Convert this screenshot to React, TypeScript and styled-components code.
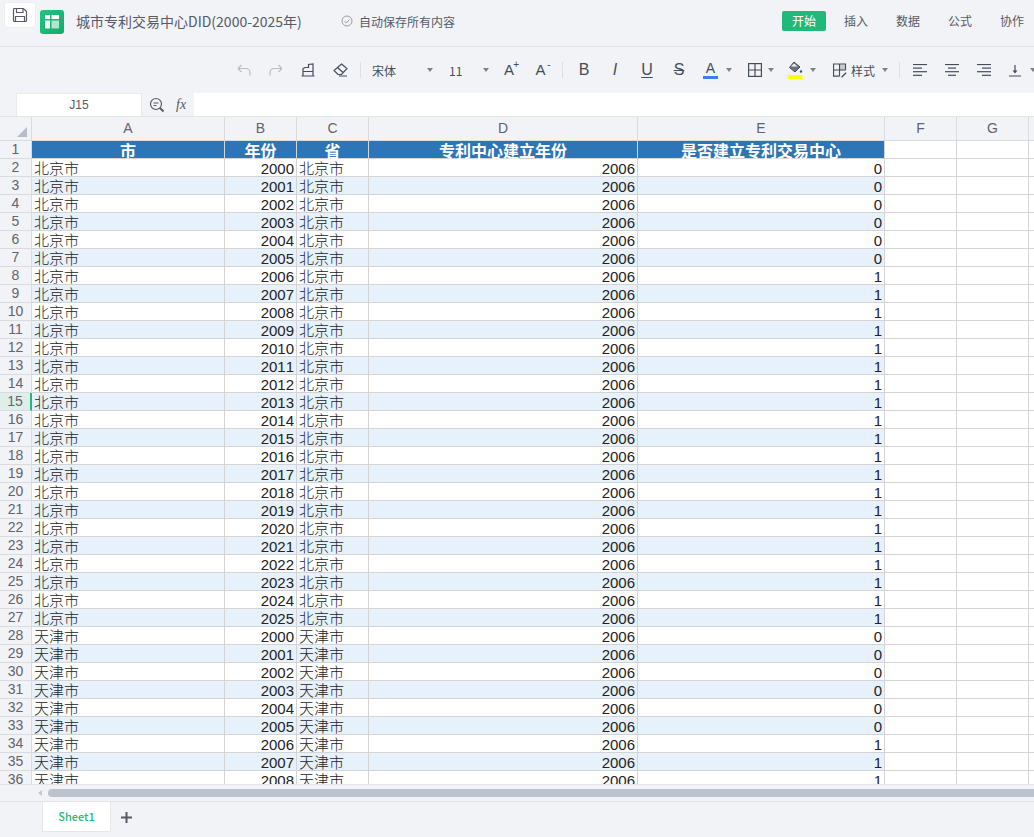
import React from 'react';
import styled, { createGlobalStyle } from 'styled-components';

const GlobalStyle = createGlobalStyle`
  html, body {
    margin: 0;
    padding: 0;
    height: 100%;
    overflow: hidden;
    background: #f2f3f7;
    font-family: "Noto Sans CJK SC", "Liberation Sans", sans-serif;
  }
`;

const Page = styled.div`
  display: flex;
  flex-direction: column;
  height: 837px;
  overflow: hidden;
`;

const TopBar = styled.div`
  display: flex;
  align-items: center;
  flex: none;
  height: 42px;
  border-bottom: 1px solid #e2e4e9;
  padding: 0 0 4px 4px;
`;

const SaveButton = styled.div`
  display: flex;
  align-items: center;
  justify-content: center;
  width: 32px;
  height: 26px;
  margin: -12px 4px 0 0;
  background: #fff;
  border: 1px solid #eceef2;
  border-radius: 3px;
  box-sizing: border-box;
`;

const Logo = styled.div`
  display: flex;
  align-items: center;
  justify-content: center;
  width: 24px;
  height: 24px;
  margin-top: 2px;
  background: linear-gradient(135deg, #22c47f, #14ab6c);
  border-radius: 3px;
`;

const DocTitle = styled.div`
  margin-left: 12px;
  font-size: 14px;
  line-height: 20px;
  color: #555a64;
  width: 265px;
  white-space: nowrap;
`;

const SaveState = styled.div`
  display: flex;
  align-items: center;
  gap: 6px;
  font-size: 12px;
  color: #555a64;
`;

const TabList = styled.div`
  display: flex;
  align-items: center;
  gap: 8px;
  margin-left: auto;
`;

const Tab = styled.div<{ $active?: boolean }>`
  width: 44px;
  height: 20px;
  line-height: 20px;
  text-align: center;
  font-size: 12px;
  border-radius: 2px;
  color: ${(p) => (p.$active ? '#fff' : '#555a64')};
  background: ${(p) => (p.$active ? '#1fb97a' : 'transparent')};
`;

const Toolbar = styled.div`
  display: flex;
  align-items: center;
  height: 46px;
  flex: none;
  padding-left: 228px;
  color: #454d5c;
  white-space: nowrap;
`;

const Tool = styled.div<{ $w?: number; $inset?: number; $muted?: boolean }>`
  display: flex;
  flex: none;
  align-items: center;
  justify-content: center;
  box-sizing: border-box;
  width: ${(p) => p.$w ?? 32}px;
  padding-left: ${(p) => p.$inset ?? 0}px;
  height: 24px;
  color: ${(p) => (p.$muted ? '#b9bdc5' : '#454d5c')};
`;

const Separator = styled.div<{ $ml?: number; $mr?: number }>`
  flex: none;
  width: 1px;
  height: 16px;
  margin: 0 ${(p) => p.$mr ?? 6}px 0 ${(p) => p.$ml ?? 4}px;
  background: #dcdfe4;
`;

const Caret = styled.div`
  flex: none;
  width: 0;
  height: 0;
  border-left: 3.5px solid transparent;
  border-right: 3.5px solid transparent;
  border-top: 4px solid #7d828c;
`;

const FontField = styled.div<{ $w: number; $left: number; $right: number }>`
  display: flex;
  flex: none;
  align-items: center;
  justify-content: space-between;
  width: ${(p) => p.$w}px;
  padding: 0 ${(p) => p.$right}px 0 ${(p) => p.$left}px;
  box-sizing: border-box;
  font-size: 12px;
  color: #454d5c;
`;

const LetterIcon = styled.span<{ $italic?: boolean; $line?: 'under' | 'through' }>`
  font-family: "Liberation Sans", sans-serif;
  font-size: 16px;
  line-height: 18px;
  font-style: ${(p) => (p.$italic ? 'italic' : 'normal')};
  text-decoration: ${(p) => (p.$line === 'under' ? 'underline' : p.$line === 'through' ? 'line-through' : 'none')};
  text-decoration-thickness: 1px;
  text-underline-offset: 2px;
`;

const SizeLetter = styled.span`
  position: relative;
  font-family: "Liberation Sans", sans-serif;
  font-size: 15px;
  line-height: 18px;
  padding-right: 4px;
  & > sup {
    position: absolute;
    top: -2px;
    right: -1px;
    font-size: 10px;
    line-height: 12px;
  }
`;

const ColorLetter = styled.span<{ $color: string }>`
  font-family: "Liberation Sans", sans-serif;
  font-size: 14px;
  line-height: 15px;
  width: 15px;
  text-align: center;
  border-bottom: 3px solid ${(p) => p.$color};
`;

const StyleLabel = styled.span`
  margin: 0 7px 0 4px;
  font-size: 12px;
`;

const FormulaBar = styled.div`
  display: flex;
  align-items: stretch;
  flex: none;
  height: 23px;
  padding-left: 16px;
  border-bottom: 1px solid #e2e4e9;
`;

const NameBox = styled.div`
  width: 126px;
  flex: none;
  background: #fff;
  border: 1px solid #e8eaee;
  border-bottom: none;
  box-sizing: border-box;
  text-align: center;
  font-family: "Liberation Sans", sans-serif;
  font-size: 12px;
  line-height: 22px;
  color: #555a64;
`;

const FormulaIcons = styled.div`
  display: flex;
  align-items: center;
  width: 52px;
  flex: none;
  padding-left: 7px;
  gap: 11px;
  box-sizing: border-box;
  color: #555a64;
`;

const Fx = styled.span`
  font-family: "Liberation Serif", serif;
  font-style: italic;
  font-size: 14px;
`;

const FormulaInput = styled.div`
  flex: 1;
  background: #fff;
`;

const Sheet = styled.div`
  flex: none;
  height: 667px;
  overflow: hidden;
  display: grid;
  grid-template-columns: 32px 193px 72px 72px 269px 247px 72px 72px 72px;
  grid-template-rows: 24px;
  grid-auto-rows: 18px;
  background: #fff;
  border-bottom: 1px solid #e2e4e9;
`;

const Corner = styled.div`
  position: relative;
  background: #f2f3f7;
  border-bottom: 1px solid #d8dbe0;
  border-right: 1px solid #d8dbe0;
  box-sizing: border-box;
  &::after {
    content: '';
    position: absolute;
    right: 4px;
    bottom: 3px;
    width: 0;
    height: 0;
    border-left: 10px solid transparent;
    border-bottom: 10px solid #b9bdc5;
  }
`;

const ColHead = styled.div`
  background: #f2f3f7;
  border-bottom: 1px solid #d8dbe0;
  border-right: 1px solid #d8dbe0;
  box-sizing: border-box;
  text-align: center;
  font-family: "Liberation Sans", sans-serif;
  font-size: 14px;
  line-height: 22px;
  color: #5f646e;
`;

const RowHead = styled.div<{ $selected?: boolean }>`
  background: ${(p) => (p.$selected ? '#dfeeea' : '#f2f3f7')};
  border-bottom: 1px solid #d8dbe0;
  border-right: ${(p) => (p.$selected ? '2px solid #1fb97a' : '1px solid #d8dbe0')};
  box-sizing: border-box;
  text-align: center;
  font-family: "Liberation Sans", sans-serif;
  font-size: 14px;
  line-height: 17px;
  color: #5f646e;
`;

const Cell = styled.div<{ $right?: boolean; $striped?: boolean }>`
  background: ${(p) => (p.$striped ? '#e6f1fb' : '#fff')};
  border-bottom: 1px solid #d4d4d4;
  border-right: 1px solid #d4d4d4;
  box-sizing: border-box;
  padding: 0 2px;
  white-space: nowrap;
  text-align: ${(p) => (p.$right ? 'right' : 'left')};
  font-family: "Liberation Sans", "Noto Sans CJK SC", sans-serif;
  font-kerning: none;
  font-weight: 300;
  font-size: 15px;
  line-height: 20px;
  color: #222;
`;

const HeaderCell = styled.div`
  background: #2e75b6;
  border-bottom: 1px solid #d4d4d4;
  border-right: 1px solid #d4d4d4;
  box-sizing: border-box;
  padding-top: 1px;
  text-align: center;
  font-family: "Noto Sans CJK SC", sans-serif;
  font-weight: 700;
  font-size: 16px;
  line-height: 17px;
  color: #fff;
`;

const EmptyCell = styled.div`
  background: #fff;
  border-bottom: 1px solid #d4d4d4;
  border-right: 1px solid #d4d4d4;
  box-sizing: border-box;
`;

const ScrollRow = styled.div`
  display: flex;
  align-items: center;
  flex: none;
  height: 16px;
  padding-left: 38px;
  border-bottom: 1px solid #e2e4e9;
  gap: 6px;
`;

const ScrollArrow = styled.div`
  flex: none;
  width: 0;
  height: 0;
  border-top: 3.5px solid transparent;
  border-bottom: 3.5px solid transparent;
  border-right: 4px solid #c3c7ce;
`;

const ScrollThumb = styled.div`
  flex: 1;
  height: 8px;
  background: #bcc3cc;
  border-radius: 4px 0 0 4px;
`;

const SheetTabs = styled.div`
  display: flex;
  align-items: flex-start;
  flex: 1;
  padding-left: 42px;
`;

const SheetTab = styled.div`
  width: 69px;
  height: 30px;
  line-height: 29px;
  box-sizing: border-box;
  background: #fff;
  border: 1px solid #e6e8ec;
  border-top: none;
  text-align: center;
  font-size: 11px;
  font-weight: 500;
  color: #1fb97a;
`;

const AddSheet = styled.div`
  display: flex;
  align-items: center;
  justify-content: center;
  width: 30px;
  height: 30px;
  color: #555a64;
`;

const stroke = { fill: 'none', stroke: 'currentColor', strokeWidth: 1.2 };

const SaveIcon = () => (
  <svg width="16" height="16" viewBox="0 0 16 16" {...stroke} color="#555a64">
    <path d="M2.5 1.5h9l3 3v9a1 1 0 0 1-1 1h-11a1 1 0 0 1-1-1v-11a1 1 0 0 1 1-1z" />
    <path d="M4.5 1.5v4h6.5v-4M3.500 14.500v-5h9v5" />
  </svg>
);

const SheetLogo = () => (
  <svg width="14" height="14" viewBox="0 0 14 14">
    <rect x="0" y="0" width="5" height="4" fill="#fff" />
    <rect x="6.5" y="0" width="7.5" height="4" fill="#fff" />
    <rect x="0" y="5.5" width="5" height="8" fill="#fff" />
    <rect x="6.5" y="5.5" width="7.5" height="8" fill="#fff" opacity="0.65" />
  </svg>
);

const CheckCircle = () => (
  <svg width="12" height="12" viewBox="0 0 12 12" fill="none" stroke="#9a9ea6" strokeWidth="1">
    <circle cx="6" cy="6" r="5" />
    <path d="M3.5 6l2 2 3-3.500" />
  </svg>
);

const UndoIcon = () => (
  <svg width="14" height="12" viewBox="0 0 14 12" {...stroke}>
    <path d="M1 4.500h8a4 4 0 0 1 4 4v3M1 4.500l3.500-3.500M1 4.500l3.500 3.500" />
  </svg>
);

const RedoIcon = () => (
  <svg width="14" height="12" viewBox="0 0 14 12" {...stroke}>
    <path d="M13 4.500h-8a4 4 0 0 0-4 4v3M13 4.500l-3.500-3.500M13 4.500l-3.500 3.500" />
  </svg>
);

const PainterIcon = () => (
  <svg width="14" height="14" viewBox="0 0 14 14" {...stroke}>
    <path d="M2 13V5.500l2-1h3.500V1.500l4.500-.5V13M2 8.500h10M.5 13h13" />
  </svg>
);

const EraserIcon = () => (
  <svg width="15" height="14" viewBox="0 0 15 14" {...stroke}>
    <path d="M8.500 1l5.500 4.500-5.500 6H5L1 7.500zM4.500 4.500l5.500 5M6 13h8" />
  </svg>
);

const BorderIcon = () => (
  <svg width="14" height="14" viewBox="0 0 14 14" {...stroke}>
    <rect x="0.600" y="0.600" width="12.800" height="12.800" />
    <path d="M7 1v12M1 7h12" />
  </svg>
);

const FillIcon = () => (
  <svg width="16" height="18" viewBox="0 0 16 18">
    <path d="M7 1l6 5-5 5-5.500-4.500z" fill="#6a707c" stroke="#454d5c" />
    <path d="M7 2.500l3.500 3H4z" fill="#f2f3f7" />
    <path d="M14 8.500l1.200 2a1.200 1.200 0 0 1-2.400 0z" fill="#454d5c" />
    <rect x="0.500" y="14" width="15" height="4" fill="#ffff00" />
  </svg>
);

const StyleIcon = () => (
  <svg width="15" height="15" viewBox="0 0 15 15" {...stroke}>
    <rect x="7" y="1" width="6" height="6" fill="#c9ccd2" stroke="none" />
    <path d="M7 13.500H.6V.6h12.800V7M7 1v12.500M1 7h12.500" />
    <path d="M9 14l4.500-4.500 1 1L10 15H9z" fill="currentColor" stroke="none" />
  </svg>
);

const AlignIcon = ({ lines }: { lines: number[][] }) => (
  <svg width="14" height="12" viewBox="0 0 14 12" {...stroke}>
    {lines.map(([x1, x2], i) => (
      <path key={i} d={`M${x1} ${0.5 + i * 3.6}H${x2}`} />
    ))}
  </svg>
);

const BottomAlignIcon = () => (
  <svg width="12" height="13" viewBox="0 0 12 13" {...stroke}>
    <path d="M6 1v7M0 12h12" />
    <path d="M3.500 6.500h5L6 9.500z" fill="currentColor" stroke="none" />
  </svg>
);

const ZoomIcon = () => (
  <svg width="16" height="16" viewBox="0 0 16 16" fill="none" stroke="currentColor" strokeWidth="1.2">
    <circle cx="7" cy="7" r="5.500" />
    <path d="M4.500 6h5M4.500 8.500h3" />
    <path d="M11 11l3.500 3.500" strokeWidth="2" />
  </svg>
);

const PlusIcon = () => (
  <svg width="11" height="11" viewBox="0 0 11 11" fill="none" stroke="currentColor" strokeWidth="2">
    <path d="M5.500 0v11M0 5.500h11" />
  </svg>
);

const columns = ['A', 'B', 'C', 'D', 'E', 'F', 'G', ''];
const headers = ['市', '年份', '省', '专利中心建立年份', '是否建立专利交易中心'];

interface RowData {
  city: string;
  year: number;
  province: string;
  built: number;
  flag: number;
}

const makeRows = (city: string, to: number): RowData[] => {
  const rows: RowData[] = [];
  for (let year = 2000; year <= to; year++) {
    rows.push({ city, year, province: city, built: 2006, flag: year >= 2006 ? 1 : 0 });
  }
  return rows;
};

const rows = [...makeRows('北京市', 2025), ...makeRows('天津市', 2008)];

const App: React.FC = () => (
  <Page>
    <GlobalStyle />
    <TopBar>
      <SaveButton>
        <SaveIcon />
      </SaveButton>
      <Logo>
        <SheetLogo />
      </Logo>
      <DocTitle>城市专利交易中心DID(2000-2025年)</DocTitle>
      <SaveState>
        <CheckCircle />
        自动保存所有内容
      </SaveState>
      <TabList>
        <Tab $active>开始</Tab>
        <Tab>插入</Tab>
        <Tab>数据</Tab>
        <Tab>公式</Tab>
        <Tab>协作</Tab>
      </TabList>
    </TopBar>

    <Toolbar>
      <Tool $muted><UndoIcon /></Tool>
      <Tool $muted><RedoIcon /></Tool>
      <Tool><PainterIcon /></Tool>
      <Tool><EraserIcon /></Tool>
      <Separator />
      <FontField $w={69} $left={5} $right={3}>宋体<Caret /></FontField>
      <FontField $w={59} $left={13} $right={6}>11<Caret /></FontField>
      <Tool><SizeLetter>A<sup>+</sup></SizeLetter></Tool>
      <Tool $w={31}><SizeLetter>A<sup>-</sup></SizeLetter></Tool>
      <Separator $ml={4} />
      <Tool $w={30}><LetterIcon>B</LetterIcon></Tool>
      <Tool><LetterIcon $italic>I</LetterIcon></Tool>
      <Tool><LetterIcon $line="under">U</LetterIcon></Tool>
      <Tool><LetterIcon $line="through">S</LetterIcon></Tool>
      <Tool $w={31}><ColorLetter $color="#3f7cf5">A</ColorLetter></Tool>
      <Caret />
      <Tool $w={36} $inset={9}><BorderIcon /></Tool>
      <Caret />
      <Tool $w={36} $inset={6}><FillIcon /></Tool>
      <Caret />
      <Tool $w={31} $inset={17}><StyleIcon /></Tool>
      <StyleLabel>样式</StyleLabel>
      <Caret />
      <Separator $ml={11} $mr={4} />
      <Tool $w={32}><AlignIcon lines={[[0, 14], [0, 9], [0, 14], [0, 9]]} /></Tool>
      <Tool><AlignIcon lines={[[0, 14], [3, 11], [0, 14], [3, 11]]} /></Tool>
      <Tool><AlignIcon lines={[[0, 14], [5, 14], [0, 14], [5, 14]]} /></Tool>
      <Tool $w={30}><BottomAlignIcon /></Tool>
      <Caret />
    </Toolbar>

    <FormulaBar>
      <NameBox>J15</NameBox>
      <FormulaIcons>
        <ZoomIcon />
        <Fx>fx</Fx>
      </FormulaIcons>
      <FormulaInput />
    </FormulaBar>

    <Sheet>
      <Corner />
      {columns.map((c, i) => (
        <ColHead key={i}>{c}</ColHead>
      ))}

      <RowHead>1</RowHead>
      {headers.map((h) => (
        <HeaderCell key={h}>{h}</HeaderCell>
      ))}
      <EmptyCell />
      <EmptyCell />
      <EmptyCell />

      {rows.map((row, i) => {
        const striped = i % 2 === 1;
        return (
          <React.Fragment key={i}>
            <RowHead $selected={i + 2 === 15}>{i + 2}</RowHead>
            <Cell $striped={striped}>{row.city}</Cell>
            <Cell $striped={striped} $right>{row.year}</Cell>
            <Cell $striped={striped}>{row.province}</Cell>
            <Cell $striped={striped} $right>{row.built}</Cell>
            <Cell $striped={striped} $right>{row.flag}</Cell>
            <EmptyCell />
            <EmptyCell />
            <EmptyCell />
          </React.Fragment>
        );
      })}
    </Sheet>

    <ScrollRow>
      <ScrollArrow />
      <ScrollThumb />
    </ScrollRow>

    <SheetTabs>
      <SheetTab>Sheet1</SheetTab>
      <AddSheet>
        <PlusIcon />
      </AddSheet>
    </SheetTabs>
  </Page>
);

export default App;
